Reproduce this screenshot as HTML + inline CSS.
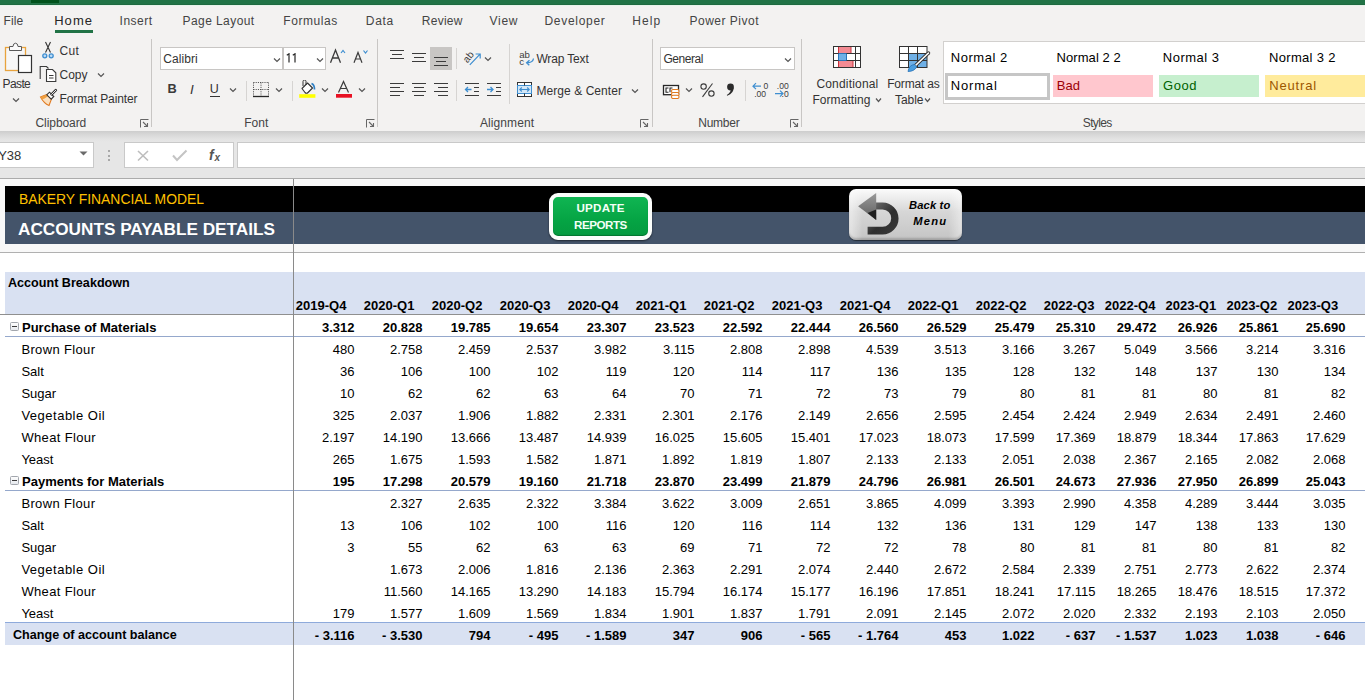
<!DOCTYPE html>
<html><head><meta charset="utf-8"><title>Accounts Payable Details</title>
<style>
html,body{margin:0;padding:0;}
body{width:1365px;height:700px;overflow:hidden;position:relative;background:#fff;font-family:"Liberation Sans",sans-serif;}
.t{position:absolute;line-height:1;white-space:pre;}
.b{position:absolute;}
</style></head><body>

<div class="b" style="left:0px;top:0px;width:1365px;height:131px;background:#f3f2f1;"></div>
<div class="b" style="left:0px;top:0px;width:1365px;height:4px;background:#217346;"></div>
<div class="b" style="left:0px;top:4px;width:1365px;height:1px;background:#1f6a40;"></div>
<div class="b" style="left:0px;top:5px;width:1365px;height:1px;background:#e6f3ea;"></div>
<div class="b" style="left:31px;top:0px;width:28px;height:3px;background:#01521c;"></div>
<div class="t" style="left:3.50px;top:14.74px;font-size:12px;color:#444;letter-spacing:0.085px;">File</div>
<div class="t" style="left:54.20px;top:13.90px;font-size:13px;color:#262626;letter-spacing:1.038px;">Home</div>
<div class="t" style="left:119.60px;top:14.74px;font-size:12px;color:#444;letter-spacing:0.477px;">Insert</div>
<div class="t" style="left:182.50px;top:14.74px;font-size:12px;color:#444;letter-spacing:0.431px;">Page Layout</div>
<div class="t" style="left:283.30px;top:14.74px;font-size:12px;color:#444;letter-spacing:0.555px;">Formulas</div>
<div class="t" style="left:365.80px;top:14.74px;font-size:12px;color:#444;letter-spacing:0.68px;">Data</div>
<div class="t" style="left:421.80px;top:14.74px;font-size:12px;color:#444;letter-spacing:0.248px;">Review</div>
<div class="t" style="left:489.40px;top:14.74px;font-size:12px;color:#444;letter-spacing:0.768px;">View</div>
<div class="t" style="left:544.50px;top:14.74px;font-size:12px;color:#444;letter-spacing:0.7px;">Developer</div>
<div class="t" style="left:632.20px;top:14.74px;font-size:12px;color:#444;letter-spacing:1.104px;">Help</div>
<div class="t" style="left:689.50px;top:14.74px;font-size:12px;color:#444;letter-spacing:0.497px;">Power Pivot</div>
<div class="b" style="left:55px;top:30px;width:38px;height:3px;background:#217346;"></div>
<div class="b" style="left:151px;top:39px;width:1px;height:88px;background:#c8c6c4;"></div>
<div class="b" style="left:377px;top:39px;width:1px;height:88px;background:#c8c6c4;"></div>
<div class="b" style="left:652px;top:39px;width:1px;height:88px;background:#c8c6c4;"></div>
<div class="b" style="left:801px;top:39px;width:1px;height:88px;background:#c8c6c4;"></div>
<svg class="b" style="left:0px;top:38px;" width="40" height="40" viewBox="0 0 40 40">
<rect x="5.5" y="9.5" width="20" height="23" fill="#f7f7f7" stroke="#e8a33d" stroke-width="1.3"/>
<path d="M9.5 12.5 V8.5 H13 Q13.2 5.2 15.5 5.2 Q17.8 5.2 18 8.5 H21.5 V12.5 Z" fill="#fafafa" stroke="#5a5a5a" stroke-width="1"/>
<rect x="18.5" y="17.5" width="13" height="17" fill="#fff" stroke="#333" stroke-width="1.2"/>
</svg>
<div class="t" style="left:2.50px;top:77.54px;font-size:12px;color:#333;letter-spacing:-0.597px;">Paste</div>
<svg class="b" style="left:11.7px;top:96.5px;" width="8" height="6" viewBox="0 0 8 6"><polyline points="1,1.5 4.0,4.5 7,1.5" fill="none" stroke="#555" stroke-width="1.2"/></svg>
<svg class="b" style="left:40px;top:40px;" width="16" height="20" viewBox="0 0 16 20">
<path d="M5.5 2 L10.5 12.5 M10.5 2 L5.5 12.5" stroke="#333" stroke-width="1.1" fill="none"/>
<circle cx="4.8" cy="15.8" r="2" fill="#bfdcf5" stroke="#3e8ed0" stroke-width="1.3"/>
<circle cx="11.2" cy="15.8" r="2" fill="#bfdcf5" stroke="#3e8ed0" stroke-width="1.3"/>
</svg>
<div class="t" style="left:59.50px;top:44.54px;font-size:12px;color:#333;letter-spacing:0.306px;">Cut</div>
<svg class="b" style="left:39px;top:65px;" width="18" height="18" viewBox="0 0 18 18">
<path d="M1.2 14 V1.5 H7.5 L9.5 3.5" fill="none" stroke="#3b3b3b" stroke-width="1.1"/>
<path d="M7.5 4.5 H13.5 L16.8 7.8 V16.5 H7.5 Z" fill="#fff" stroke="#3b3b3b" stroke-width="1.1"/>
<path d="M10 10.5 H14.5 M10 13 H14.5" stroke="#3b3b3b" stroke-width="1"/>
</svg>
<div class="t" style="left:59.50px;top:68.54px;font-size:12px;color:#333;letter-spacing:-0.005px;">Copy</div>
<svg class="b" style="left:96.8px;top:71.7px;" width="8" height="6" viewBox="0 0 8 6"><polyline points="1,1.5 4.0,4.5 7,1.5" fill="none" stroke="#555" stroke-width="1.2"/></svg>
<svg class="b" style="left:38px;top:88px;" width="20" height="20" viewBox="0 0 20 20">
<path d="M2.5 9 L9 6.5 L13.5 11 L11 17.5 Q6 15.5 2.5 9 Z" fill="#fbe0bf" stroke="#e07b22" stroke-width="1.1"/>
<path d="M2.5 9 L9 6.5 L10.5 8 Q6 11 4 11.5 Z" fill="#f0a040"/>
<path d="M8.8 6.8 L11.5 4.2 L15.8 8.5 L13.2 11.2 Z" fill="#fff" stroke="#333" stroke-width="1.1"/>
<path d="M13.6 6.4 L17.8 2.2" stroke="#333" stroke-width="2.6" stroke-linecap="round"/>
<path d="M13.6 6.4 L17.8 2.2" stroke="#fff" stroke-width="0.9" stroke-linecap="round"/>
</svg>
<div class="t" style="left:59.50px;top:92.54px;font-size:12px;color:#333;letter-spacing:-0.097px;">Format Painter</div>
<div class="t" style="left:35.50px;top:116.54px;font-size:12px;color:#444;letter-spacing:-0.072px;">Clipboard</div>
<svg class="b" style="left:139.5px;top:118.5px;" width="9" height="9" viewBox="0 0 9 9"><path d="M0.5 8.5 V0.5 H8.5" fill="none" stroke="#666" stroke-width="1"/><path d="M3 3 L7.5 7.5 M7.5 4 V7.5 H4" fill="none" stroke="#666" stroke-width="1.1"/></svg>
<div class="b" style="left:160px;top:47px;width:123px;height:23px;background:#fff;border:1px solid #c8c6c4;box-sizing:border-box;"></div>
<div class="b" style="left:283px;top:47px;width:43px;height:23px;background:#fff;border:1px solid #c8c6c4;box-sizing:border-box;"></div>
<div class="t" style="left:163.30px;top:52.64px;font-size:12px;color:#333;letter-spacing:0.047px;">Calibri</div>
<svg class="b" style="left:285px;top:53px;" width="14" height="11" viewBox="0 0 14 11"><path d="M1.8 2.3 L4 0.8 V9.6 M7.8 2.3 L10 0.8 V9.6" fill="none" stroke="#262626" stroke-width="1.2"/></svg>
<svg class="b" style="left:272.5px;top:56.5px;" width="8" height="6" viewBox="0 0 8 6"><polyline points="1,1.5 4.0,4.5 7,1.5" fill="none" stroke="#555" stroke-width="1.2"/></svg>
<svg class="b" style="left:315.5px;top:56.5px;" width="8" height="6" viewBox="0 0 8 6"><polyline points="1,1.5 4.0,4.5 7,1.5" fill="none" stroke="#555" stroke-width="1.2"/></svg>
<svg class="b" style="left:329px;top:48px;" width="40" height="16" viewBox="0 0 40 16">
<path d="M1.5 14.8 L6.5 2 L11.5 14.8 M3.4 10 H9.6" fill="none" stroke="#3b3b3b" stroke-width="1.3"/>
<polyline points="12,5 14,2.5 16,5" fill="none" stroke="#3e8ed0" stroke-width="1.2"/>
<path d="M25 14.8 L29 4.5 L33 14.8 M26.6 11 H31.4" fill="none" stroke="#3b3b3b" stroke-width="1.2"/>
<polyline points="34.5,2.5 36.5,5 38.5,2.5" fill="none" stroke="#3e8ed0" stroke-width="1.2"/>
</svg>
<div class="t" style="left:167.40px;top:82.96px;font-size:12.8px;color:#3b3b3b;font-weight:bold;">B</div>
<div class="t" style="left:190.00px;top:82.57px;font-size:13.5px;color:#333;font-style:italic;font-family:"Liberation Serif",serif;">I</div>
<div class="t" style="left:209.80px;top:82.92px;font-size:12.5px;color:#333;">U</div>
<div class="b" style="left:209.5px;top:95.5px;width:10px;height:1px;background:#333;"></div>
<svg class="b" style="left:228.5px;top:87px;" width="8" height="6" viewBox="0 0 8 6"><polyline points="1,1.5 4.0,4.5 7,1.5" fill="none" stroke="#555" stroke-width="1.2"/></svg>
<div class="b" style="left:245.5px;top:80.5px;width:1px;height:20.5px;background:#d6d4d2;"></div>
<svg class="b" style="left:252px;top:81px;" width="18" height="17" viewBox="0 0 18 17">
<path d="M1.5 1.5 H16.5 M1.5 8.5 H16.5" stroke="#444" stroke-width="1" stroke-dasharray="1 1.2"/>
<path d="M1.5 1.5 V15 M9 1.5 V15 M16.5 1.5 V15" stroke="#444" stroke-width="1" stroke-dasharray="1 1.2"/>
<path d="M1 15.5 H17" stroke="#262626" stroke-width="1.3"/>
</svg>
<svg class="b" style="left:274.5px;top:87px;" width="8" height="6" viewBox="0 0 8 6"><polyline points="1,1.5 4.0,4.5 7,1.5" fill="none" stroke="#555" stroke-width="1.2"/></svg>
<div class="b" style="left:291.5px;top:80.5px;width:1px;height:20.5px;background:#d6d4d2;"></div>
<svg class="b" style="left:297px;top:80px;" width="20" height="19" viewBox="0 0 20 19">
<path d="M5 8.5 L10.5 3 L15.5 8 L11 12.5 Q9.5 14 8 12.5 Z" fill="#fff" stroke="#333" stroke-width="1.1" stroke-linejoin="round"/>
<path d="M9 5 V1.5 A1.5 1.5 0 0 0 6 1.5 V6" fill="none" stroke="#333" stroke-width="1"/>
<path d="M14.5 3.5 Q17.5 4.5 17.5 9.5" fill="none" stroke="#2e7fc4" stroke-width="1.7"/>
<rect x="2.2" y="14.2" width="16.2" height="3.6" fill="#ffff00"/>
</svg>
<svg class="b" style="left:320.5px;top:87px;" width="8" height="6" viewBox="0 0 8 6"><polyline points="1,1.5 4.0,4.5 7,1.5" fill="none" stroke="#555" stroke-width="1.2"/></svg>
<svg class="b" style="left:335px;top:80px;" width="18" height="19" viewBox="0 0 18 19">
<path d="M3.5 12.5 L8.5 1.5 L13.5 12.5 M5.3 8.5 H11.7" fill="none" stroke="#3b3b3b" stroke-width="1.2"/>
<rect x="1" y="14" width="16" height="3.7" fill="#e81123"/>
</svg>
<svg class="b" style="left:357.6px;top:87px;" width="8" height="6" viewBox="0 0 8 6"><polyline points="1,1.5 4.0,4.5 7,1.5" fill="none" stroke="#555" stroke-width="1.2"/></svg>
<div class="t" style="left:244.20px;top:116.64px;font-size:12px;color:#444;letter-spacing:0.061px;">Font</div>
<svg class="b" style="left:365.5px;top:118.5px;" width="9" height="9" viewBox="0 0 9 9"><path d="M0.5 8.5 V0.5 H8.5" fill="none" stroke="#666" stroke-width="1"/><path d="M3 3 L7.5 7.5 M7.5 4 V7.5 H4" fill="none" stroke="#666" stroke-width="1.1"/></svg>
<div class="b" style="left:390px;top:50px;width:14px;height:1px;background:#3b3b3b;"></div>
<div class="b" style="left:392px;top:54px;width:10px;height:1px;background:#3b3b3b;"></div>
<div class="b" style="left:390px;top:58px;width:14px;height:1px;background:#3b3b3b;"></div>
<div class="b" style="left:412px;top:53px;width:14px;height:1px;background:#3b3b3b;"></div>
<div class="b" style="left:414px;top:57px;width:10px;height:1px;background:#3b3b3b;"></div>
<div class="b" style="left:412px;top:61px;width:14px;height:1px;background:#3b3b3b;"></div>
<div class="b" style="left:430px;top:47px;width:22px;height:23px;background:#c8c6c4;"></div>
<div class="b" style="left:434px;top:57px;width:14px;height:1px;background:#3b3b3b;"></div>
<div class="b" style="left:436px;top:61px;width:10px;height:1px;background:#3b3b3b;"></div>
<div class="b" style="left:434px;top:65px;width:14px;height:1px;background:#3b3b3b;"></div>
<div class="b" style="left:456px;top:48px;width:1px;height:21px;background:#d6d4d2;"></div>
<svg class="b" style="left:460px;top:48px;" width="24" height="20" viewBox="0 0 24 20">
<text x="0" y="0" font-size="10" font-family="Liberation Sans" fill="#3b3b3b" transform="translate(7.5 15.5) rotate(-52)">ab</text>
<path d="M9.8 16.8 L19.8 6.3 M15.6 6 H20.2 V10.6" fill="none" stroke="#3e8ed0" stroke-width="1.2"/>
</svg>
<svg class="b" style="left:483.5px;top:55.5px;" width="8" height="6" viewBox="0 0 8 6"><polyline points="1,1.5 4.0,4.5 7,1.5" fill="none" stroke="#555" stroke-width="1.2"/></svg>
<div class="b" style="left:509px;top:44px;width:1px;height:60px;background:#d6d4d2;"></div>
<svg class="b" style="left:518px;top:49px;" width="18" height="18" viewBox="0 0 18 18">
<text x="1.2" y="8.6" font-size="9.6" font-family="Liberation Sans" fill="#3b3b3b">ab</text>
<text x="1.2" y="15.8" font-size="9.6" font-family="Liberation Sans" fill="#3b3b3b">c</text>
<path d="M15.5 9.5 Q15 13.5 9 13.8 M11.5 11.2 L8.6 13.8 L11.3 16.3" fill="none" stroke="#3e8ed0" stroke-width="1.3"/>
</svg>
<div class="t" style="left:536.40px;top:52.54px;font-size:12px;color:#333;letter-spacing:-0.147px;">Wrap Text</div>
<div class="b" style="left:390px;top:83px;width:14px;height:1px;background:#3b3b3b;"></div>
<div class="b" style="left:390px;top:87px;width:10px;height:1px;background:#3b3b3b;"></div>
<div class="b" style="left:390px;top:91px;width:14px;height:1px;background:#3b3b3b;"></div>
<div class="b" style="left:390px;top:95px;width:10px;height:1px;background:#3b3b3b;"></div>
<div class="b" style="left:412px;top:83px;width:14px;height:1px;background:#3b3b3b;"></div>
<div class="b" style="left:414px;top:87px;width:10px;height:1px;background:#3b3b3b;"></div>
<div class="b" style="left:412px;top:91px;width:14px;height:1px;background:#3b3b3b;"></div>
<div class="b" style="left:414px;top:95px;width:10px;height:1px;background:#3b3b3b;"></div>
<div class="b" style="left:434px;top:83px;width:14px;height:1px;background:#3b3b3b;"></div>
<div class="b" style="left:438px;top:87px;width:10px;height:1px;background:#3b3b3b;"></div>
<div class="b" style="left:434px;top:91px;width:14px;height:1px;background:#3b3b3b;"></div>
<div class="b" style="left:438px;top:95px;width:10px;height:1px;background:#3b3b3b;"></div>
<div class="b" style="left:456px;top:80px;width:1px;height:21px;background:#d6d4d2;"></div>
<div class="b" style="left:465px;top:83px;width:14px;height:1px;background:#3b3b3b;"></div>
<div class="b" style="left:473.5px;top:87px;width:5.5px;height:1px;background:#3b3b3b;"></div>
<div class="b" style="left:473.5px;top:91px;width:5.5px;height:1px;background:#3b3b3b;"></div>
<div class="b" style="left:465px;top:95px;width:14px;height:1px;background:#3b3b3b;"></div>
<div class="b" style="left:487px;top:83px;width:14px;height:1px;background:#3b3b3b;"></div>
<div class="b" style="left:495.5px;top:87px;width:5.5px;height:1px;background:#3b3b3b;"></div>
<div class="b" style="left:495.5px;top:91px;width:5.5px;height:1px;background:#3b3b3b;"></div>
<div class="b" style="left:487px;top:95px;width:14px;height:1px;background:#3b3b3b;"></div>
<svg class="b" style="left:464px;top:85px;" width="9" height="9" viewBox="0 0 9 9"><path d="M1.5 4.5 H7.5 M4 2 L1.5 4.5 L4 7" fill="none" stroke="#3e8ed0" stroke-width="1.3"/></svg>
<svg class="b" style="left:486px;top:85px;" width="9" height="9" viewBox="0 0 9 9"><path d="M1 4.5 H7 M4.5 2 L7 4.5 L4.5 7" fill="none" stroke="#3e8ed0" stroke-width="1.3"/></svg>
<svg class="b" style="left:516px;top:81px;" width="17" height="17" viewBox="0 0 17 17">
<rect x="1.5" y="1.5" width="14" height="14" fill="#fff" stroke="#333" stroke-width="1"/>
<rect x="1.5" y="4.5" width="14" height="8" fill="#d4e8f8" stroke="#3e8ed0" stroke-width="1"/>
<path d="M8.5 1.5 V4.5 M8.5 12.5 V15.5" stroke="#333" stroke-width="1"/>
<path d="M3.8 8.5 H13.2 M5.8 6.5 L3.8 8.5 L5.8 10.5 M11.2 6.5 L13.2 8.5 L11.2 10.5" fill="none" stroke="#3e8ed0" stroke-width="1.1"/>
</svg>
<div class="t" style="left:536.40px;top:84.74px;font-size:12px;color:#333;letter-spacing:0.069px;">Merge &amp; Center</div>
<svg class="b" style="left:630.5px;top:87.5px;" width="8" height="6" viewBox="0 0 8 6"><polyline points="1,1.5 4.0,4.5 7,1.5" fill="none" stroke="#555" stroke-width="1.2"/></svg>
<div class="t" style="left:480.00px;top:117.14px;font-size:12px;color:#444;letter-spacing:0.078px;">Alignment</div>
<svg class="b" style="left:639.5px;top:118.5px;" width="9" height="9" viewBox="0 0 9 9"><path d="M0.5 8.5 V0.5 H8.5" fill="none" stroke="#666" stroke-width="1"/><path d="M3 3 L7.5 7.5 M7.5 4 V7.5 H4" fill="none" stroke="#666" stroke-width="1.1"/></svg>
<div class="b" style="left:659.5px;top:47px;width:135px;height:23px;background:#fff;border:1px solid #c8c6c4;box-sizing:border-box;"></div>
<div class="t" style="left:663.40px;top:52.94px;font-size:12px;color:#333;letter-spacing:-0.434px;">General</div>
<svg class="b" style="left:783.5px;top:56.5px;" width="8" height="6" viewBox="0 0 8 6"><polyline points="1,1.5 4.0,4.5 7,1.5" fill="none" stroke="#555" stroke-width="1.2"/></svg>
<svg class="b" style="left:661px;top:83px;" width="20" height="16" viewBox="0 0 20 16">
<rect x="2.5" y="2.5" width="15" height="9.2" fill="#fff" stroke="#262626" stroke-width="1.3"/>
<path d="M7.5 5 H5 V9.2 H7.5 M11.5 5 H9 V9.2" fill="none" stroke="#262626" stroke-width="1.1"/>
<rect x="10.5" y="6.5" width="7.5" height="3.2" rx="1.5" fill="#fff" stroke="#e07b22" stroke-width="1.1"/>
<rect x="10.5" y="9.5" width="7.5" height="3.2" rx="1.5" fill="#fff" stroke="#e07b22" stroke-width="1.1"/>
<rect x="10.5" y="12.3" width="7.5" height="3.2" rx="1.5" fill="#fff" stroke="#e07b22" stroke-width="1.1"/>
</svg>
<svg class="b" style="left:684.8px;top:87.3px;" width="8" height="6" viewBox="0 0 8 6"><polyline points="1,1.5 4.0,4.5 7,1.5" fill="none" stroke="#555" stroke-width="1.2"/></svg>
<svg class="b" style="left:699px;top:81px;" width="18" height="18" viewBox="0 0 18 18">
<circle cx="4.6" cy="5.6" r="2.7" fill="none" stroke="#3b3b3b" stroke-width="1.1"/>
<circle cx="12.4" cy="12.6" r="2.7" fill="none" stroke="#3b3b3b" stroke-width="1.1"/>
<path d="M13.5 2.5 L3.5 15.8" stroke="#3b3b3b" stroke-width="1.1"/>
</svg>
<svg class="b" style="left:724px;top:82px;" width="13" height="16" viewBox="0 0 13 16"><circle cx="6.5" cy="5" r="3.4" fill="#2b2b2b"/><path d="M9.5 5.5 Q10.2 11 3.2 13.8 L2.8 12.9 Q6.8 10.5 6.8 7.5 Z" fill="#2b2b2b"/></svg>
<div class="b" style="left:745px;top:80px;width:1px;height:21px;background:#d6d4d2;"></div>
<svg class="b" style="left:751px;top:81px;" width="20" height="18" viewBox="0 0 20 18">
<path d="M2 5.2 H10 M5 2.2 L2 5.2 L5 8.2" fill="none" stroke="#3e8ed0" stroke-width="1.2"/>
<text x="12.6" y="7.8" font-size="8.6" font-family="Liberation Sans" fill="#3b3b3b">0</text>
<text x="3.2" y="15.8" font-size="8.6" font-family="Liberation Sans" fill="#3b3b3b">.00</text>
</svg>
<svg class="b" style="left:773px;top:81px;" width="20" height="18" viewBox="0 0 20 18">
<text x="3.8" y="7.8" font-size="8.6" font-family="Liberation Sans" fill="#3b3b3b">.00</text>
<path d="M2 12.6 H10 M7 9.6 L10 12.6 L7 15.6" fill="none" stroke="#3e8ed0" stroke-width="1.2"/>
<text x="8.6" y="15.8" font-size="8.6" font-family="Liberation Sans" fill="#3b3b3b">.0</text>
</svg>
<div class="t" style="left:698.20px;top:117.14px;font-size:12px;color:#444;letter-spacing:-0.217px;">Number</div>
<svg class="b" style="left:789.5px;top:118.5px;" width="9" height="9" viewBox="0 0 9 9"><path d="M0.5 8.5 V0.5 H8.5" fill="none" stroke="#666" stroke-width="1"/><path d="M3 3 L7.5 7.5 M7.5 4 V7.5 H4" fill="none" stroke="#666" stroke-width="1.1"/></svg>
<svg class="b" style="left:825px;top:40px;" width="40" height="32" viewBox="0 0 40 32">
<rect x="8.5" y="6.5" width="27" height="21" fill="#fff"/>
<rect x="13.5" y="6.5" width="12.5" height="7" fill="#f38b93" stroke="#c8323c" stroke-width="1"/>
<rect x="13.5" y="20.5" width="14.5" height="7" fill="#f38b93" stroke="#c8323c" stroke-width="1"/>
<rect x="13.5" y="13.5" width="8" height="7" fill="#6fb0e6" stroke="#2874b8" stroke-width="1"/>
<path d="M8.5 13.5 H13.5 M21.5 13.5 H35.5 M8.5 20.5 H13.5 M26 13.5 M21.5 20.5 H35.5 M30.5 6.5 V27.5" fill="none" stroke="#333" stroke-width="1"/>
<rect x="8.5" y="6.5" width="27" height="21" fill="none" stroke="#333" stroke-width="1"/>
</svg>
<div class="t" style="left:816.40px;top:78.04px;font-size:12px;color:#333;letter-spacing:0.185px;">Conditional</div>
<div class="t" style="left:812.40px;top:94.04px;font-size:12px;color:#333;letter-spacing:0.071px;">Formatting</div>
<svg class="b" style="left:874.5px;top:97px;" width="7" height="6" viewBox="0 0 7 6"><polyline points="1,1.5 3.5,4.5 6,1.5" fill="none" stroke="#555" stroke-width="1.2"/></svg>
<svg class="b" style="left:895px;top:40px;" width="40" height="34" viewBox="0 0 40 34">
<rect x="4.5" y="6.5" width="27.5" height="21" fill="#fff"/>
<rect x="13.5" y="13.5" width="18.5" height="14" fill="#6fb0e6"/>
<path d="M4.5 13.5 H32 M4.5 20.5 H32 M13.5 6.5 V27.5 M22.5 6.5 V27.5" fill="none" stroke="#333" stroke-width="1"/>
<rect x="4.5" y="6.5" width="27.5" height="21" fill="none" stroke="#333" stroke-width="1"/>
<path d="M33.5 13 L20 26" stroke="#333" stroke-width="3.4" stroke-linecap="round"/>
<path d="M33.5 13 L20 26" stroke="#fff" stroke-width="1.6" stroke-linecap="round"/>
<path d="M19.5 24.5 Q14 25 13 31.5 Q19 31.5 21.8 27 Z" fill="#4a9ee0" stroke="#2874b8" stroke-width="0.8"/>
</svg>
<div class="t" style="left:887.20px;top:78.04px;font-size:12px;color:#333;letter-spacing:-0.177px;">Format as</div>
<div class="t" style="left:895.00px;top:94.04px;font-size:12px;color:#333;letter-spacing:-0.047px;">Table</div>
<svg class="b" style="left:924px;top:97px;" width="7" height="6" viewBox="0 0 7 6"><polyline points="1,1.5 3.5,4.5 6,1.5" fill="none" stroke="#555" stroke-width="1.2"/></svg>
<div class="b" style="left:943px;top:41px;width:430px;height:62.5px;background:#fff;border:1px solid #d2d0ce;box-sizing:border-box;"></div>
<div class="t" style="left:950.80px;top:51.40px;font-size:13px;color:#000;letter-spacing:0.521px;">Normal 2</div>
<div class="t" style="left:1056.60px;top:51.40px;font-size:13px;color:#000;letter-spacing:0.058px;">Normal 2 2</div>
<div class="t" style="left:1162.80px;top:51.40px;font-size:13px;color:#000;letter-spacing:0.493px;">Normal 3</div>
<div class="t" style="left:1269.00px;top:51.40px;font-size:13px;color:#000;letter-spacing:0.314px;">Normal 3 2</div>
<div class="b" style="left:945px;top:72.5px;width:105px;height:27px;background:#fff;border:3px solid #c6c6c6;box-sizing:border-box;"></div>
<div class="t" style="left:950.80px;top:79.10px;font-size:13px;color:#000;letter-spacing:0.819px;">Normal</div>
<div class="b" style="left:1053px;top:75px;width:100px;height:22px;background:#ffc7ce;"></div>
<div class="t" style="left:1056.80px;top:79.10px;font-size:13px;color:#9c0006;letter-spacing:-0.02px;">Bad</div>
<div class="b" style="left:1159.3px;top:75px;width:99.6px;height:22px;background:#c6efce;"></div>
<div class="t" style="left:1163.00px;top:79.10px;font-size:13px;color:#006100;letter-spacing:0.562px;">Good</div>
<div class="b" style="left:1265.2px;top:75px;width:100px;height:22px;background:#ffeb9c;"></div>
<div class="t" style="left:1269.20px;top:79.10px;font-size:13px;color:#9c5700;letter-spacing:0.846px;">Neutral</div>
<div class="t" style="left:1082.80px;top:116.84px;font-size:12px;color:#444;letter-spacing:-0.658px;">Styles</div>
<div class="b" style="left:0px;top:131px;width:1365px;height:48px;background:linear-gradient(#cdcdcd 0px,#d9d9d9 4px,#e3e3e3 8px,#e6e6e6 11px,#e6e6e6 100%);"></div>
<div class="b" style="left:-1px;top:142px;width:95px;height:26px;background:#fff;border:1px solid #c9c9c9;box-sizing:border-box;"></div>
<div class="t" style="left:-1.80px;top:149.20px;font-size:13px;color:#333;">Y38</div>
<svg class="b" style="left:78px;top:150px;" width="11" height="7" viewBox="0 0 11 7"><path d="M1.5 1.5 H9.5 L5.5 5.5 Z" fill="#6a6a6a"/></svg>
<div class="b" style="left:108px;top:150px;width:2px;height:2px;background:#a8a8a8;"></div>
<div class="b" style="left:108px;top:154.5px;width:2px;height:2px;background:#a8a8a8;"></div>
<div class="b" style="left:108px;top:159px;width:2px;height:2px;background:#a8a8a8;"></div>
<div class="b" style="left:124px;top:142px;width:110px;height:26px;background:#fff;border:1px solid #c9c9c9;box-sizing:border-box;"></div>
<svg class="b" style="left:136px;top:150px;" width="15" height="12" viewBox="0 0 15 12"><path d="M2 1 L12 10.5 M12 1 L2 10.5" stroke="#bdbdbd" stroke-width="1.6"/></svg>
<svg class="b" style="left:171px;top:149px;" width="17" height="13" viewBox="0 0 17 13"><path d="M2 6.5 L6 11 L15.5 1.5" fill="none" stroke="#c4c4c4" stroke-width="2"/></svg>
<div class="t" style="left:209.00px;top:148.35px;font-size:14px;color:#555;font-weight:bold;font-style:italic;font-family:"Liberation Serif",serif;">f</div>
<div class="t" style="left:214.50px;top:153.03px;font-size:10px;color:#555;font-weight:bold;font-style:italic;font-family:"Liberation Serif",serif;">x</div>
<div class="b" style="left:237px;top:142px;width:1130px;height:26px;background:#fff;border:1px solid #c9c9c9;box-sizing:border-box;"></div>
<div class="b" style="left:0px;top:179px;width:1365px;height:521px;background:#fff;"></div>
<div class="b" style="left:0px;top:179px;width:1365px;height:73px;background:#f8f8f8;"></div>
<div class="b" style="left:0px;top:178px;width:1365px;height:1px;background:#ababab;"></div>
<div class="b" style="left:0px;top:252px;width:1365px;height:1px;background:#b0b0b0;"></div>
<div class="b" style="left:5px;top:186px;width:1360px;height:26px;background:#000;"></div>
<div class="b" style="left:5px;top:212px;width:1360px;height:31.5px;background:#44546a;"></div>
<div class="t" style="left:19.00px;top:192.83px;font-size:13.9px;color:#ffc000;">BAKERY FINANCIAL MODEL</div>
<div class="t" style="left:18.00px;top:221.44px;font-size:17.2px;color:#fff;font-weight:bold;">ACCOUNTS PAYABLE DETAILS</div>
<div class="b" style="left:548.5px;top:193px;width:95.5px;height:39px;border:4px solid #fbfdfb;border-radius:9px;background:linear-gradient(#10b552,#05a444 60%,#049a3f);box-shadow:0 1px 2px rgba(0,0,0,.55), inset 0 -1px 1px rgba(0,0,0,.25);"></div>
<div class="t" style="left:576.40px;top:202.08px;font-size:11.6px;color:#f4fff6;font-weight:bold;letter-spacing:0.278px;">UPDATE</div>
<div class="t" style="left:574.10px;top:219.18px;font-size:11.6px;color:#f4fff6;font-weight:bold;letter-spacing:-0.474px;">REPORTS</div>
<div class="b" style="left:849px;top:189px;width:112.5px;height:51px;border-radius:7px;background:linear-gradient(90deg,rgba(255,255,255,.5),rgba(255,255,255,0) 12%,rgba(255,255,255,0) 88%,rgba(255,255,255,.45)),linear-gradient(#fbfbfb 0%,#e9e9e9 22%,#d6d6d6 45%,#cdcdcd 75%,#c4c4c4 100%);box-shadow:inset 0 -2px 2px rgba(0,0,0,.18), 0 1px 1px rgba(0,0,0,.5);"></div>
<svg class="b" style="left:849px;top:189px;" width="112" height="51" viewBox="0 0 112 51">
<defs>
<linearGradient id="ag" x1="0" y1="0" x2="0" y2="1"><stop offset="0" stop-color="#9a9a9a"/><stop offset="1" stop-color="#5c5c5c"/></linearGradient>
<linearGradient id="ug" x1="0" y1="0" x2="1" y2="1"><stop offset="0" stop-color="#7a7a7a"/><stop offset="0.55" stop-color="#2e2e2e"/><stop offset="1" stop-color="#3a3a3a"/></linearGradient>
</defs>
<path d="M24 13.5 H33.6 A15.95 15.95 0 0 1 33.6 45.4 H18.6 V37.8 H33.6 A8.6 8.6 0 0 0 33.6 20.6 H24 Z" fill="url(#ug)"/>
<path d="M27.2 4 L9.1 17.3 L27.2 31.1 Z" fill="url(#ag)"/>
<path d="M18.6 24 L27.2 31.1 L27.2 20.6 Z" fill="#1e1e1e"/>
</svg>
<div class="t" style="left:909.00px;top:200.12px;font-size:11.2px;color:#000;font-weight:bold;font-style:italic;letter-spacing:0.146px;">Back to</div>
<div class="t" style="left:913.30px;top:216.32px;font-size:11.2px;color:#000;font-weight:bold;font-style:italic;letter-spacing:1.227px;">Menu</div>
<div class="b" style="left:5px;top:272px;width:1360px;height:42px;background:#d9e1f2;"></div>
<div class="t" style="left:8.00px;top:276.93px;font-size:12.6px;color:#000;font-weight:bold;">Account Breakdown</div>
<div class="t" style="left:295.80px;top:299.00px;font-size:13px;color:#000;font-weight:bold;">2019-Q4</div>
<div class="t" style="left:363.80px;top:299.00px;font-size:13px;color:#000;font-weight:bold;">2020-Q1</div>
<div class="t" style="left:431.80px;top:299.00px;font-size:13px;color:#000;font-weight:bold;">2020-Q2</div>
<div class="t" style="left:499.80px;top:299.00px;font-size:13px;color:#000;font-weight:bold;">2020-Q3</div>
<div class="t" style="left:567.80px;top:299.00px;font-size:13px;color:#000;font-weight:bold;">2020-Q4</div>
<div class="t" style="left:635.80px;top:299.00px;font-size:13px;color:#000;font-weight:bold;">2021-Q1</div>
<div class="t" style="left:703.80px;top:299.00px;font-size:13px;color:#000;font-weight:bold;">2021-Q2</div>
<div class="t" style="left:771.80px;top:299.00px;font-size:13px;color:#000;font-weight:bold;">2021-Q3</div>
<div class="t" style="left:839.80px;top:299.00px;font-size:13px;color:#000;font-weight:bold;">2021-Q4</div>
<div class="t" style="left:907.80px;top:299.00px;font-size:13px;color:#000;font-weight:bold;">2022-Q1</div>
<div class="t" style="left:975.80px;top:299.00px;font-size:13px;color:#000;font-weight:bold;">2022-Q2</div>
<div class="t" style="left:1043.80px;top:299.00px;font-size:13px;color:#000;font-weight:bold;">2022-Q3</div>
<div class="t" style="left:1104.80px;top:299.00px;font-size:13px;color:#000;font-weight:bold;">2022-Q4</div>
<div class="t" style="left:1165.60px;top:299.00px;font-size:13px;color:#000;font-weight:bold;">2023-Q1</div>
<div class="t" style="left:1226.60px;top:299.00px;font-size:13px;color:#000;font-weight:bold;">2023-Q2</div>
<div class="t" style="left:1287.60px;top:299.00px;font-size:13px;color:#000;font-weight:bold;">2023-Q3</div>
<div class="b" style="left:0px;top:314px;width:1365px;height:1px;background:#8f8f8f;"></div>
<div class="b" style="left:5px;top:622px;width:1360px;height:22.5px;background:#d9e1f2;"></div>
<div class="t" style="left:22.00px;top:320.60px;font-size:13px;color:#000;font-weight:bold;">Purchase of Materials</div>
<div class="b" style="left:10px;top:322px;width:7px;height:7px;border:1px solid #a2a6ad;border-radius:1.5px;background:linear-gradient(#fdfdfd,#e6e9ee);"></div>
<div class="b" style="left:12px;top:326px;width:5px;height:1px;background:#3a3a3a;"></div>
<div class="t" style="left:284.50px;width:70px;text-align:right;top:320.60px;font-size:13px;color:#000;font-weight:bold;">3.312</div>
<div class="t" style="left:352.50px;width:70px;text-align:right;top:320.60px;font-size:13px;color:#000;font-weight:bold;">20.828</div>
<div class="t" style="left:420.50px;width:70px;text-align:right;top:320.60px;font-size:13px;color:#000;font-weight:bold;">19.785</div>
<div class="t" style="left:488.50px;width:70px;text-align:right;top:320.60px;font-size:13px;color:#000;font-weight:bold;">19.654</div>
<div class="t" style="left:556.50px;width:70px;text-align:right;top:320.60px;font-size:13px;color:#000;font-weight:bold;">23.307</div>
<div class="t" style="left:624.50px;width:70px;text-align:right;top:320.60px;font-size:13px;color:#000;font-weight:bold;">23.523</div>
<div class="t" style="left:692.50px;width:70px;text-align:right;top:320.60px;font-size:13px;color:#000;font-weight:bold;">22.592</div>
<div class="t" style="left:760.50px;width:70px;text-align:right;top:320.60px;font-size:13px;color:#000;font-weight:bold;">22.444</div>
<div class="t" style="left:828.50px;width:70px;text-align:right;top:320.60px;font-size:13px;color:#000;font-weight:bold;">26.560</div>
<div class="t" style="left:896.50px;width:70px;text-align:right;top:320.60px;font-size:13px;color:#000;font-weight:bold;">26.529</div>
<div class="t" style="left:964.50px;width:70px;text-align:right;top:320.60px;font-size:13px;color:#000;font-weight:bold;">25.479</div>
<div class="t" style="left:1025.50px;width:70px;text-align:right;top:320.60px;font-size:13px;color:#000;font-weight:bold;">25.310</div>
<div class="t" style="left:1086.50px;width:70px;text-align:right;top:320.60px;font-size:13px;color:#000;font-weight:bold;">29.472</div>
<div class="t" style="left:1147.50px;width:70px;text-align:right;top:320.60px;font-size:13px;color:#000;font-weight:bold;">26.926</div>
<div class="t" style="left:1208.50px;width:70px;text-align:right;top:320.60px;font-size:13px;color:#000;font-weight:bold;">25.861</div>
<div class="t" style="left:1275.50px;width:70px;text-align:right;top:320.60px;font-size:13px;color:#000;font-weight:bold;">25.690</div>
<div class="t" style="left:21.40px;top:342.60px;font-size:13px;color:#000;letter-spacing:0.35px;">Brown Flour</div>
<div class="t" style="left:284.50px;width:70px;text-align:right;top:342.60px;font-size:13px;color:#000;">480</div>
<div class="t" style="left:352.50px;width:70px;text-align:right;top:342.60px;font-size:13px;color:#000;">2.758</div>
<div class="t" style="left:420.50px;width:70px;text-align:right;top:342.60px;font-size:13px;color:#000;">2.459</div>
<div class="t" style="left:488.50px;width:70px;text-align:right;top:342.60px;font-size:13px;color:#000;">2.537</div>
<div class="t" style="left:556.50px;width:70px;text-align:right;top:342.60px;font-size:13px;color:#000;">3.982</div>
<div class="t" style="left:624.50px;width:70px;text-align:right;top:342.60px;font-size:13px;color:#000;">3.115</div>
<div class="t" style="left:692.50px;width:70px;text-align:right;top:342.60px;font-size:13px;color:#000;">2.808</div>
<div class="t" style="left:760.50px;width:70px;text-align:right;top:342.60px;font-size:13px;color:#000;">2.898</div>
<div class="t" style="left:828.50px;width:70px;text-align:right;top:342.60px;font-size:13px;color:#000;">4.539</div>
<div class="t" style="left:896.50px;width:70px;text-align:right;top:342.60px;font-size:13px;color:#000;">3.513</div>
<div class="t" style="left:964.50px;width:70px;text-align:right;top:342.60px;font-size:13px;color:#000;">3.166</div>
<div class="t" style="left:1025.50px;width:70px;text-align:right;top:342.60px;font-size:13px;color:#000;">3.267</div>
<div class="t" style="left:1086.50px;width:70px;text-align:right;top:342.60px;font-size:13px;color:#000;">5.049</div>
<div class="t" style="left:1147.50px;width:70px;text-align:right;top:342.60px;font-size:13px;color:#000;">3.566</div>
<div class="t" style="left:1208.50px;width:70px;text-align:right;top:342.60px;font-size:13px;color:#000;">3.214</div>
<div class="t" style="left:1275.50px;width:70px;text-align:right;top:342.60px;font-size:13px;color:#000;">3.316</div>
<div class="t" style="left:21.40px;top:364.60px;font-size:13px;color:#000;">Salt</div>
<div class="t" style="left:284.50px;width:70px;text-align:right;top:364.60px;font-size:13px;color:#000;">36</div>
<div class="t" style="left:352.50px;width:70px;text-align:right;top:364.60px;font-size:13px;color:#000;">106</div>
<div class="t" style="left:420.50px;width:70px;text-align:right;top:364.60px;font-size:13px;color:#000;">100</div>
<div class="t" style="left:488.50px;width:70px;text-align:right;top:364.60px;font-size:13px;color:#000;">102</div>
<div class="t" style="left:556.50px;width:70px;text-align:right;top:364.60px;font-size:13px;color:#000;">119</div>
<div class="t" style="left:624.50px;width:70px;text-align:right;top:364.60px;font-size:13px;color:#000;">120</div>
<div class="t" style="left:692.50px;width:70px;text-align:right;top:364.60px;font-size:13px;color:#000;">114</div>
<div class="t" style="left:760.50px;width:70px;text-align:right;top:364.60px;font-size:13px;color:#000;">117</div>
<div class="t" style="left:828.50px;width:70px;text-align:right;top:364.60px;font-size:13px;color:#000;">136</div>
<div class="t" style="left:896.50px;width:70px;text-align:right;top:364.60px;font-size:13px;color:#000;">135</div>
<div class="t" style="left:964.50px;width:70px;text-align:right;top:364.60px;font-size:13px;color:#000;">128</div>
<div class="t" style="left:1025.50px;width:70px;text-align:right;top:364.60px;font-size:13px;color:#000;">132</div>
<div class="t" style="left:1086.50px;width:70px;text-align:right;top:364.60px;font-size:13px;color:#000;">148</div>
<div class="t" style="left:1147.50px;width:70px;text-align:right;top:364.60px;font-size:13px;color:#000;">137</div>
<div class="t" style="left:1208.50px;width:70px;text-align:right;top:364.60px;font-size:13px;color:#000;">130</div>
<div class="t" style="left:1275.50px;width:70px;text-align:right;top:364.60px;font-size:13px;color:#000;">134</div>
<div class="t" style="left:21.40px;top:386.60px;font-size:13px;color:#000;">Sugar</div>
<div class="t" style="left:284.50px;width:70px;text-align:right;top:386.60px;font-size:13px;color:#000;">10</div>
<div class="t" style="left:352.50px;width:70px;text-align:right;top:386.60px;font-size:13px;color:#000;">62</div>
<div class="t" style="left:420.50px;width:70px;text-align:right;top:386.60px;font-size:13px;color:#000;">62</div>
<div class="t" style="left:488.50px;width:70px;text-align:right;top:386.60px;font-size:13px;color:#000;">63</div>
<div class="t" style="left:556.50px;width:70px;text-align:right;top:386.60px;font-size:13px;color:#000;">64</div>
<div class="t" style="left:624.50px;width:70px;text-align:right;top:386.60px;font-size:13px;color:#000;">70</div>
<div class="t" style="left:692.50px;width:70px;text-align:right;top:386.60px;font-size:13px;color:#000;">71</div>
<div class="t" style="left:760.50px;width:70px;text-align:right;top:386.60px;font-size:13px;color:#000;">72</div>
<div class="t" style="left:828.50px;width:70px;text-align:right;top:386.60px;font-size:13px;color:#000;">73</div>
<div class="t" style="left:896.50px;width:70px;text-align:right;top:386.60px;font-size:13px;color:#000;">79</div>
<div class="t" style="left:964.50px;width:70px;text-align:right;top:386.60px;font-size:13px;color:#000;">80</div>
<div class="t" style="left:1025.50px;width:70px;text-align:right;top:386.60px;font-size:13px;color:#000;">81</div>
<div class="t" style="left:1086.50px;width:70px;text-align:right;top:386.60px;font-size:13px;color:#000;">81</div>
<div class="t" style="left:1147.50px;width:70px;text-align:right;top:386.60px;font-size:13px;color:#000;">80</div>
<div class="t" style="left:1208.50px;width:70px;text-align:right;top:386.60px;font-size:13px;color:#000;">81</div>
<div class="t" style="left:1275.50px;width:70px;text-align:right;top:386.60px;font-size:13px;color:#000;">82</div>
<div class="t" style="left:21.40px;top:408.60px;font-size:13px;color:#000;letter-spacing:0.5px;">Vegetable Oil</div>
<div class="t" style="left:284.50px;width:70px;text-align:right;top:408.60px;font-size:13px;color:#000;">325</div>
<div class="t" style="left:352.50px;width:70px;text-align:right;top:408.60px;font-size:13px;color:#000;">2.037</div>
<div class="t" style="left:420.50px;width:70px;text-align:right;top:408.60px;font-size:13px;color:#000;">1.906</div>
<div class="t" style="left:488.50px;width:70px;text-align:right;top:408.60px;font-size:13px;color:#000;">1.882</div>
<div class="t" style="left:556.50px;width:70px;text-align:right;top:408.60px;font-size:13px;color:#000;">2.331</div>
<div class="t" style="left:624.50px;width:70px;text-align:right;top:408.60px;font-size:13px;color:#000;">2.301</div>
<div class="t" style="left:692.50px;width:70px;text-align:right;top:408.60px;font-size:13px;color:#000;">2.176</div>
<div class="t" style="left:760.50px;width:70px;text-align:right;top:408.60px;font-size:13px;color:#000;">2.149</div>
<div class="t" style="left:828.50px;width:70px;text-align:right;top:408.60px;font-size:13px;color:#000;">2.656</div>
<div class="t" style="left:896.50px;width:70px;text-align:right;top:408.60px;font-size:13px;color:#000;">2.595</div>
<div class="t" style="left:964.50px;width:70px;text-align:right;top:408.60px;font-size:13px;color:#000;">2.454</div>
<div class="t" style="left:1025.50px;width:70px;text-align:right;top:408.60px;font-size:13px;color:#000;">2.424</div>
<div class="t" style="left:1086.50px;width:70px;text-align:right;top:408.60px;font-size:13px;color:#000;">2.949</div>
<div class="t" style="left:1147.50px;width:70px;text-align:right;top:408.60px;font-size:13px;color:#000;">2.634</div>
<div class="t" style="left:1208.50px;width:70px;text-align:right;top:408.60px;font-size:13px;color:#000;">2.491</div>
<div class="t" style="left:1275.50px;width:70px;text-align:right;top:408.60px;font-size:13px;color:#000;">2.460</div>
<div class="t" style="left:21.40px;top:430.60px;font-size:13px;color:#000;letter-spacing:0.35px;">Wheat Flour</div>
<div class="t" style="left:284.50px;width:70px;text-align:right;top:430.60px;font-size:13px;color:#000;">2.197</div>
<div class="t" style="left:352.50px;width:70px;text-align:right;top:430.60px;font-size:13px;color:#000;">14.190</div>
<div class="t" style="left:420.50px;width:70px;text-align:right;top:430.60px;font-size:13px;color:#000;">13.666</div>
<div class="t" style="left:488.50px;width:70px;text-align:right;top:430.60px;font-size:13px;color:#000;">13.487</div>
<div class="t" style="left:556.50px;width:70px;text-align:right;top:430.60px;font-size:13px;color:#000;">14.939</div>
<div class="t" style="left:624.50px;width:70px;text-align:right;top:430.60px;font-size:13px;color:#000;">16.025</div>
<div class="t" style="left:692.50px;width:70px;text-align:right;top:430.60px;font-size:13px;color:#000;">15.605</div>
<div class="t" style="left:760.50px;width:70px;text-align:right;top:430.60px;font-size:13px;color:#000;">15.401</div>
<div class="t" style="left:828.50px;width:70px;text-align:right;top:430.60px;font-size:13px;color:#000;">17.023</div>
<div class="t" style="left:896.50px;width:70px;text-align:right;top:430.60px;font-size:13px;color:#000;">18.073</div>
<div class="t" style="left:964.50px;width:70px;text-align:right;top:430.60px;font-size:13px;color:#000;">17.599</div>
<div class="t" style="left:1025.50px;width:70px;text-align:right;top:430.60px;font-size:13px;color:#000;">17.369</div>
<div class="t" style="left:1086.50px;width:70px;text-align:right;top:430.60px;font-size:13px;color:#000;">18.879</div>
<div class="t" style="left:1147.50px;width:70px;text-align:right;top:430.60px;font-size:13px;color:#000;">18.344</div>
<div class="t" style="left:1208.50px;width:70px;text-align:right;top:430.60px;font-size:13px;color:#000;">17.863</div>
<div class="t" style="left:1275.50px;width:70px;text-align:right;top:430.60px;font-size:13px;color:#000;">17.629</div>
<div class="t" style="left:21.40px;top:452.60px;font-size:13px;color:#000;">Yeast</div>
<div class="t" style="left:284.50px;width:70px;text-align:right;top:452.60px;font-size:13px;color:#000;">265</div>
<div class="t" style="left:352.50px;width:70px;text-align:right;top:452.60px;font-size:13px;color:#000;">1.675</div>
<div class="t" style="left:420.50px;width:70px;text-align:right;top:452.60px;font-size:13px;color:#000;">1.593</div>
<div class="t" style="left:488.50px;width:70px;text-align:right;top:452.60px;font-size:13px;color:#000;">1.582</div>
<div class="t" style="left:556.50px;width:70px;text-align:right;top:452.60px;font-size:13px;color:#000;">1.871</div>
<div class="t" style="left:624.50px;width:70px;text-align:right;top:452.60px;font-size:13px;color:#000;">1.892</div>
<div class="t" style="left:692.50px;width:70px;text-align:right;top:452.60px;font-size:13px;color:#000;">1.819</div>
<div class="t" style="left:760.50px;width:70px;text-align:right;top:452.60px;font-size:13px;color:#000;">1.807</div>
<div class="t" style="left:828.50px;width:70px;text-align:right;top:452.60px;font-size:13px;color:#000;">2.133</div>
<div class="t" style="left:896.50px;width:70px;text-align:right;top:452.60px;font-size:13px;color:#000;">2.133</div>
<div class="t" style="left:964.50px;width:70px;text-align:right;top:452.60px;font-size:13px;color:#000;">2.051</div>
<div class="t" style="left:1025.50px;width:70px;text-align:right;top:452.60px;font-size:13px;color:#000;">2.038</div>
<div class="t" style="left:1086.50px;width:70px;text-align:right;top:452.60px;font-size:13px;color:#000;">2.367</div>
<div class="t" style="left:1147.50px;width:70px;text-align:right;top:452.60px;font-size:13px;color:#000;">2.165</div>
<div class="t" style="left:1208.50px;width:70px;text-align:right;top:452.60px;font-size:13px;color:#000;">2.082</div>
<div class="t" style="left:1275.50px;width:70px;text-align:right;top:452.60px;font-size:13px;color:#000;">2.068</div>
<div class="t" style="left:22.00px;top:474.60px;font-size:13px;color:#000;font-weight:bold;">Payments for Materials</div>
<div class="b" style="left:10px;top:476px;width:7px;height:7px;border:1px solid #a2a6ad;border-radius:1.5px;background:linear-gradient(#fdfdfd,#e6e9ee);"></div>
<div class="b" style="left:12px;top:480px;width:5px;height:1px;background:#3a3a3a;"></div>
<div class="t" style="left:284.50px;width:70px;text-align:right;top:474.60px;font-size:13px;color:#000;font-weight:bold;">195</div>
<div class="t" style="left:352.50px;width:70px;text-align:right;top:474.60px;font-size:13px;color:#000;font-weight:bold;">17.298</div>
<div class="t" style="left:420.50px;width:70px;text-align:right;top:474.60px;font-size:13px;color:#000;font-weight:bold;">20.579</div>
<div class="t" style="left:488.50px;width:70px;text-align:right;top:474.60px;font-size:13px;color:#000;font-weight:bold;">19.160</div>
<div class="t" style="left:556.50px;width:70px;text-align:right;top:474.60px;font-size:13px;color:#000;font-weight:bold;">21.718</div>
<div class="t" style="left:624.50px;width:70px;text-align:right;top:474.60px;font-size:13px;color:#000;font-weight:bold;">23.870</div>
<div class="t" style="left:692.50px;width:70px;text-align:right;top:474.60px;font-size:13px;color:#000;font-weight:bold;">23.499</div>
<div class="t" style="left:760.50px;width:70px;text-align:right;top:474.60px;font-size:13px;color:#000;font-weight:bold;">21.879</div>
<div class="t" style="left:828.50px;width:70px;text-align:right;top:474.60px;font-size:13px;color:#000;font-weight:bold;">24.796</div>
<div class="t" style="left:896.50px;width:70px;text-align:right;top:474.60px;font-size:13px;color:#000;font-weight:bold;">26.981</div>
<div class="t" style="left:964.50px;width:70px;text-align:right;top:474.60px;font-size:13px;color:#000;font-weight:bold;">26.501</div>
<div class="t" style="left:1025.50px;width:70px;text-align:right;top:474.60px;font-size:13px;color:#000;font-weight:bold;">24.673</div>
<div class="t" style="left:1086.50px;width:70px;text-align:right;top:474.60px;font-size:13px;color:#000;font-weight:bold;">27.936</div>
<div class="t" style="left:1147.50px;width:70px;text-align:right;top:474.60px;font-size:13px;color:#000;font-weight:bold;">27.950</div>
<div class="t" style="left:1208.50px;width:70px;text-align:right;top:474.60px;font-size:13px;color:#000;font-weight:bold;">26.899</div>
<div class="t" style="left:1275.50px;width:70px;text-align:right;top:474.60px;font-size:13px;color:#000;font-weight:bold;">25.043</div>
<div class="t" style="left:21.40px;top:496.60px;font-size:13px;color:#000;letter-spacing:0.35px;">Brown Flour</div>
<div class="t" style="left:352.50px;width:70px;text-align:right;top:496.60px;font-size:13px;color:#000;">2.327</div>
<div class="t" style="left:420.50px;width:70px;text-align:right;top:496.60px;font-size:13px;color:#000;">2.635</div>
<div class="t" style="left:488.50px;width:70px;text-align:right;top:496.60px;font-size:13px;color:#000;">2.322</div>
<div class="t" style="left:556.50px;width:70px;text-align:right;top:496.60px;font-size:13px;color:#000;">3.384</div>
<div class="t" style="left:624.50px;width:70px;text-align:right;top:496.60px;font-size:13px;color:#000;">3.622</div>
<div class="t" style="left:692.50px;width:70px;text-align:right;top:496.60px;font-size:13px;color:#000;">3.009</div>
<div class="t" style="left:760.50px;width:70px;text-align:right;top:496.60px;font-size:13px;color:#000;">2.651</div>
<div class="t" style="left:828.50px;width:70px;text-align:right;top:496.60px;font-size:13px;color:#000;">3.865</div>
<div class="t" style="left:896.50px;width:70px;text-align:right;top:496.60px;font-size:13px;color:#000;">4.099</div>
<div class="t" style="left:964.50px;width:70px;text-align:right;top:496.60px;font-size:13px;color:#000;">3.393</div>
<div class="t" style="left:1025.50px;width:70px;text-align:right;top:496.60px;font-size:13px;color:#000;">2.990</div>
<div class="t" style="left:1086.50px;width:70px;text-align:right;top:496.60px;font-size:13px;color:#000;">4.358</div>
<div class="t" style="left:1147.50px;width:70px;text-align:right;top:496.60px;font-size:13px;color:#000;">4.289</div>
<div class="t" style="left:1208.50px;width:70px;text-align:right;top:496.60px;font-size:13px;color:#000;">3.444</div>
<div class="t" style="left:1275.50px;width:70px;text-align:right;top:496.60px;font-size:13px;color:#000;">3.035</div>
<div class="t" style="left:21.40px;top:518.60px;font-size:13px;color:#000;">Salt</div>
<div class="t" style="left:284.50px;width:70px;text-align:right;top:518.60px;font-size:13px;color:#000;">13</div>
<div class="t" style="left:352.50px;width:70px;text-align:right;top:518.60px;font-size:13px;color:#000;">106</div>
<div class="t" style="left:420.50px;width:70px;text-align:right;top:518.60px;font-size:13px;color:#000;">102</div>
<div class="t" style="left:488.50px;width:70px;text-align:right;top:518.60px;font-size:13px;color:#000;">100</div>
<div class="t" style="left:556.50px;width:70px;text-align:right;top:518.60px;font-size:13px;color:#000;">116</div>
<div class="t" style="left:624.50px;width:70px;text-align:right;top:518.60px;font-size:13px;color:#000;">120</div>
<div class="t" style="left:692.50px;width:70px;text-align:right;top:518.60px;font-size:13px;color:#000;">116</div>
<div class="t" style="left:760.50px;width:70px;text-align:right;top:518.60px;font-size:13px;color:#000;">114</div>
<div class="t" style="left:828.50px;width:70px;text-align:right;top:518.60px;font-size:13px;color:#000;">132</div>
<div class="t" style="left:896.50px;width:70px;text-align:right;top:518.60px;font-size:13px;color:#000;">136</div>
<div class="t" style="left:964.50px;width:70px;text-align:right;top:518.60px;font-size:13px;color:#000;">131</div>
<div class="t" style="left:1025.50px;width:70px;text-align:right;top:518.60px;font-size:13px;color:#000;">129</div>
<div class="t" style="left:1086.50px;width:70px;text-align:right;top:518.60px;font-size:13px;color:#000;">147</div>
<div class="t" style="left:1147.50px;width:70px;text-align:right;top:518.60px;font-size:13px;color:#000;">138</div>
<div class="t" style="left:1208.50px;width:70px;text-align:right;top:518.60px;font-size:13px;color:#000;">133</div>
<div class="t" style="left:1275.50px;width:70px;text-align:right;top:518.60px;font-size:13px;color:#000;">130</div>
<div class="t" style="left:21.40px;top:540.60px;font-size:13px;color:#000;">Sugar</div>
<div class="t" style="left:284.50px;width:70px;text-align:right;top:540.60px;font-size:13px;color:#000;">3</div>
<div class="t" style="left:352.50px;width:70px;text-align:right;top:540.60px;font-size:13px;color:#000;">55</div>
<div class="t" style="left:420.50px;width:70px;text-align:right;top:540.60px;font-size:13px;color:#000;">62</div>
<div class="t" style="left:488.50px;width:70px;text-align:right;top:540.60px;font-size:13px;color:#000;">63</div>
<div class="t" style="left:556.50px;width:70px;text-align:right;top:540.60px;font-size:13px;color:#000;">63</div>
<div class="t" style="left:624.50px;width:70px;text-align:right;top:540.60px;font-size:13px;color:#000;">69</div>
<div class="t" style="left:692.50px;width:70px;text-align:right;top:540.60px;font-size:13px;color:#000;">71</div>
<div class="t" style="left:760.50px;width:70px;text-align:right;top:540.60px;font-size:13px;color:#000;">72</div>
<div class="t" style="left:828.50px;width:70px;text-align:right;top:540.60px;font-size:13px;color:#000;">72</div>
<div class="t" style="left:896.50px;width:70px;text-align:right;top:540.60px;font-size:13px;color:#000;">78</div>
<div class="t" style="left:964.50px;width:70px;text-align:right;top:540.60px;font-size:13px;color:#000;">80</div>
<div class="t" style="left:1025.50px;width:70px;text-align:right;top:540.60px;font-size:13px;color:#000;">81</div>
<div class="t" style="left:1086.50px;width:70px;text-align:right;top:540.60px;font-size:13px;color:#000;">81</div>
<div class="t" style="left:1147.50px;width:70px;text-align:right;top:540.60px;font-size:13px;color:#000;">80</div>
<div class="t" style="left:1208.50px;width:70px;text-align:right;top:540.60px;font-size:13px;color:#000;">81</div>
<div class="t" style="left:1275.50px;width:70px;text-align:right;top:540.60px;font-size:13px;color:#000;">82</div>
<div class="t" style="left:21.40px;top:562.60px;font-size:13px;color:#000;letter-spacing:0.5px;">Vegetable Oil</div>
<div class="t" style="left:352.50px;width:70px;text-align:right;top:562.60px;font-size:13px;color:#000;">1.673</div>
<div class="t" style="left:420.50px;width:70px;text-align:right;top:562.60px;font-size:13px;color:#000;">2.006</div>
<div class="t" style="left:488.50px;width:70px;text-align:right;top:562.60px;font-size:13px;color:#000;">1.816</div>
<div class="t" style="left:556.50px;width:70px;text-align:right;top:562.60px;font-size:13px;color:#000;">2.136</div>
<div class="t" style="left:624.50px;width:70px;text-align:right;top:562.60px;font-size:13px;color:#000;">2.363</div>
<div class="t" style="left:692.50px;width:70px;text-align:right;top:562.60px;font-size:13px;color:#000;">2.291</div>
<div class="t" style="left:760.50px;width:70px;text-align:right;top:562.60px;font-size:13px;color:#000;">2.074</div>
<div class="t" style="left:828.50px;width:70px;text-align:right;top:562.60px;font-size:13px;color:#000;">2.440</div>
<div class="t" style="left:896.50px;width:70px;text-align:right;top:562.60px;font-size:13px;color:#000;">2.672</div>
<div class="t" style="left:964.50px;width:70px;text-align:right;top:562.60px;font-size:13px;color:#000;">2.584</div>
<div class="t" style="left:1025.50px;width:70px;text-align:right;top:562.60px;font-size:13px;color:#000;">2.339</div>
<div class="t" style="left:1086.50px;width:70px;text-align:right;top:562.60px;font-size:13px;color:#000;">2.751</div>
<div class="t" style="left:1147.50px;width:70px;text-align:right;top:562.60px;font-size:13px;color:#000;">2.773</div>
<div class="t" style="left:1208.50px;width:70px;text-align:right;top:562.60px;font-size:13px;color:#000;">2.622</div>
<div class="t" style="left:1275.50px;width:70px;text-align:right;top:562.60px;font-size:13px;color:#000;">2.374</div>
<div class="t" style="left:21.40px;top:584.60px;font-size:13px;color:#000;letter-spacing:0.35px;">Wheat Flour</div>
<div class="t" style="left:352.50px;width:70px;text-align:right;top:584.60px;font-size:13px;color:#000;">11.560</div>
<div class="t" style="left:420.50px;width:70px;text-align:right;top:584.60px;font-size:13px;color:#000;">14.165</div>
<div class="t" style="left:488.50px;width:70px;text-align:right;top:584.60px;font-size:13px;color:#000;">13.290</div>
<div class="t" style="left:556.50px;width:70px;text-align:right;top:584.60px;font-size:13px;color:#000;">14.183</div>
<div class="t" style="left:624.50px;width:70px;text-align:right;top:584.60px;font-size:13px;color:#000;">15.794</div>
<div class="t" style="left:692.50px;width:70px;text-align:right;top:584.60px;font-size:13px;color:#000;">16.174</div>
<div class="t" style="left:760.50px;width:70px;text-align:right;top:584.60px;font-size:13px;color:#000;">15.177</div>
<div class="t" style="left:828.50px;width:70px;text-align:right;top:584.60px;font-size:13px;color:#000;">16.196</div>
<div class="t" style="left:896.50px;width:70px;text-align:right;top:584.60px;font-size:13px;color:#000;">17.851</div>
<div class="t" style="left:964.50px;width:70px;text-align:right;top:584.60px;font-size:13px;color:#000;">18.241</div>
<div class="t" style="left:1025.50px;width:70px;text-align:right;top:584.60px;font-size:13px;color:#000;">17.115</div>
<div class="t" style="left:1086.50px;width:70px;text-align:right;top:584.60px;font-size:13px;color:#000;">18.265</div>
<div class="t" style="left:1147.50px;width:70px;text-align:right;top:584.60px;font-size:13px;color:#000;">18.476</div>
<div class="t" style="left:1208.50px;width:70px;text-align:right;top:584.60px;font-size:13px;color:#000;">18.515</div>
<div class="t" style="left:1275.50px;width:70px;text-align:right;top:584.60px;font-size:13px;color:#000;">17.372</div>
<div class="t" style="left:21.40px;top:606.60px;font-size:13px;color:#000;">Yeast</div>
<div class="t" style="left:284.50px;width:70px;text-align:right;top:606.60px;font-size:13px;color:#000;">179</div>
<div class="t" style="left:352.50px;width:70px;text-align:right;top:606.60px;font-size:13px;color:#000;">1.577</div>
<div class="t" style="left:420.50px;width:70px;text-align:right;top:606.60px;font-size:13px;color:#000;">1.609</div>
<div class="t" style="left:488.50px;width:70px;text-align:right;top:606.60px;font-size:13px;color:#000;">1.569</div>
<div class="t" style="left:556.50px;width:70px;text-align:right;top:606.60px;font-size:13px;color:#000;">1.834</div>
<div class="t" style="left:624.50px;width:70px;text-align:right;top:606.60px;font-size:13px;color:#000;">1.901</div>
<div class="t" style="left:692.50px;width:70px;text-align:right;top:606.60px;font-size:13px;color:#000;">1.837</div>
<div class="t" style="left:760.50px;width:70px;text-align:right;top:606.60px;font-size:13px;color:#000;">1.791</div>
<div class="t" style="left:828.50px;width:70px;text-align:right;top:606.60px;font-size:13px;color:#000;">2.091</div>
<div class="t" style="left:896.50px;width:70px;text-align:right;top:606.60px;font-size:13px;color:#000;">2.145</div>
<div class="t" style="left:964.50px;width:70px;text-align:right;top:606.60px;font-size:13px;color:#000;">2.072</div>
<div class="t" style="left:1025.50px;width:70px;text-align:right;top:606.60px;font-size:13px;color:#000;">2.020</div>
<div class="t" style="left:1086.50px;width:70px;text-align:right;top:606.60px;font-size:13px;color:#000;">2.332</div>
<div class="t" style="left:1147.50px;width:70px;text-align:right;top:606.60px;font-size:13px;color:#000;">2.193</div>
<div class="t" style="left:1208.50px;width:70px;text-align:right;top:606.60px;font-size:13px;color:#000;">2.103</div>
<div class="t" style="left:1275.50px;width:70px;text-align:right;top:606.60px;font-size:13px;color:#000;">2.050</div>
<div class="t" style="left:13.00px;top:628.93px;font-size:12.6px;color:#000;font-weight:bold;">Change of account balance</div>
<div class="t" style="left:284.50px;width:70px;text-align:right;top:628.60px;font-size:13px;color:#000;font-weight:bold;">- 3.116</div>
<div class="t" style="left:352.50px;width:70px;text-align:right;top:628.60px;font-size:13px;color:#000;font-weight:bold;">- 3.530</div>
<div class="t" style="left:420.50px;width:70px;text-align:right;top:628.60px;font-size:13px;color:#000;font-weight:bold;">794</div>
<div class="t" style="left:488.50px;width:70px;text-align:right;top:628.60px;font-size:13px;color:#000;font-weight:bold;">- 495</div>
<div class="t" style="left:556.50px;width:70px;text-align:right;top:628.60px;font-size:13px;color:#000;font-weight:bold;">- 1.589</div>
<div class="t" style="left:624.50px;width:70px;text-align:right;top:628.60px;font-size:13px;color:#000;font-weight:bold;">347</div>
<div class="t" style="left:692.50px;width:70px;text-align:right;top:628.60px;font-size:13px;color:#000;font-weight:bold;">906</div>
<div class="t" style="left:760.50px;width:70px;text-align:right;top:628.60px;font-size:13px;color:#000;font-weight:bold;">- 565</div>
<div class="t" style="left:828.50px;width:70px;text-align:right;top:628.60px;font-size:13px;color:#000;font-weight:bold;">- 1.764</div>
<div class="t" style="left:896.50px;width:70px;text-align:right;top:628.60px;font-size:13px;color:#000;font-weight:bold;">453</div>
<div class="t" style="left:964.50px;width:70px;text-align:right;top:628.60px;font-size:13px;color:#000;font-weight:bold;">1.022</div>
<div class="t" style="left:1025.50px;width:70px;text-align:right;top:628.60px;font-size:13px;color:#000;font-weight:bold;">- 637</div>
<div class="t" style="left:1086.50px;width:70px;text-align:right;top:628.60px;font-size:13px;color:#000;font-weight:bold;">- 1.537</div>
<div class="t" style="left:1147.50px;width:70px;text-align:right;top:628.60px;font-size:13px;color:#000;font-weight:bold;">1.023</div>
<div class="t" style="left:1208.50px;width:70px;text-align:right;top:628.60px;font-size:13px;color:#000;font-weight:bold;">1.038</div>
<div class="t" style="left:1275.50px;width:70px;text-align:right;top:628.60px;font-size:13px;color:#000;font-weight:bold;">- 646</div>
<div class="b" style="left:5px;top:336px;width:1360px;height:1px;background:#95a8cc;"></div>
<div class="b" style="left:5px;top:490px;width:1360px;height:1px;background:#95a8cc;"></div>
<div class="b" style="left:5px;top:622px;width:1360px;height:1px;background:#8eaadb;"></div>
<div class="b" style="left:293px;top:179px;width:1px;height:521px;background:#8a8a8a;"></div>
</body></html>
